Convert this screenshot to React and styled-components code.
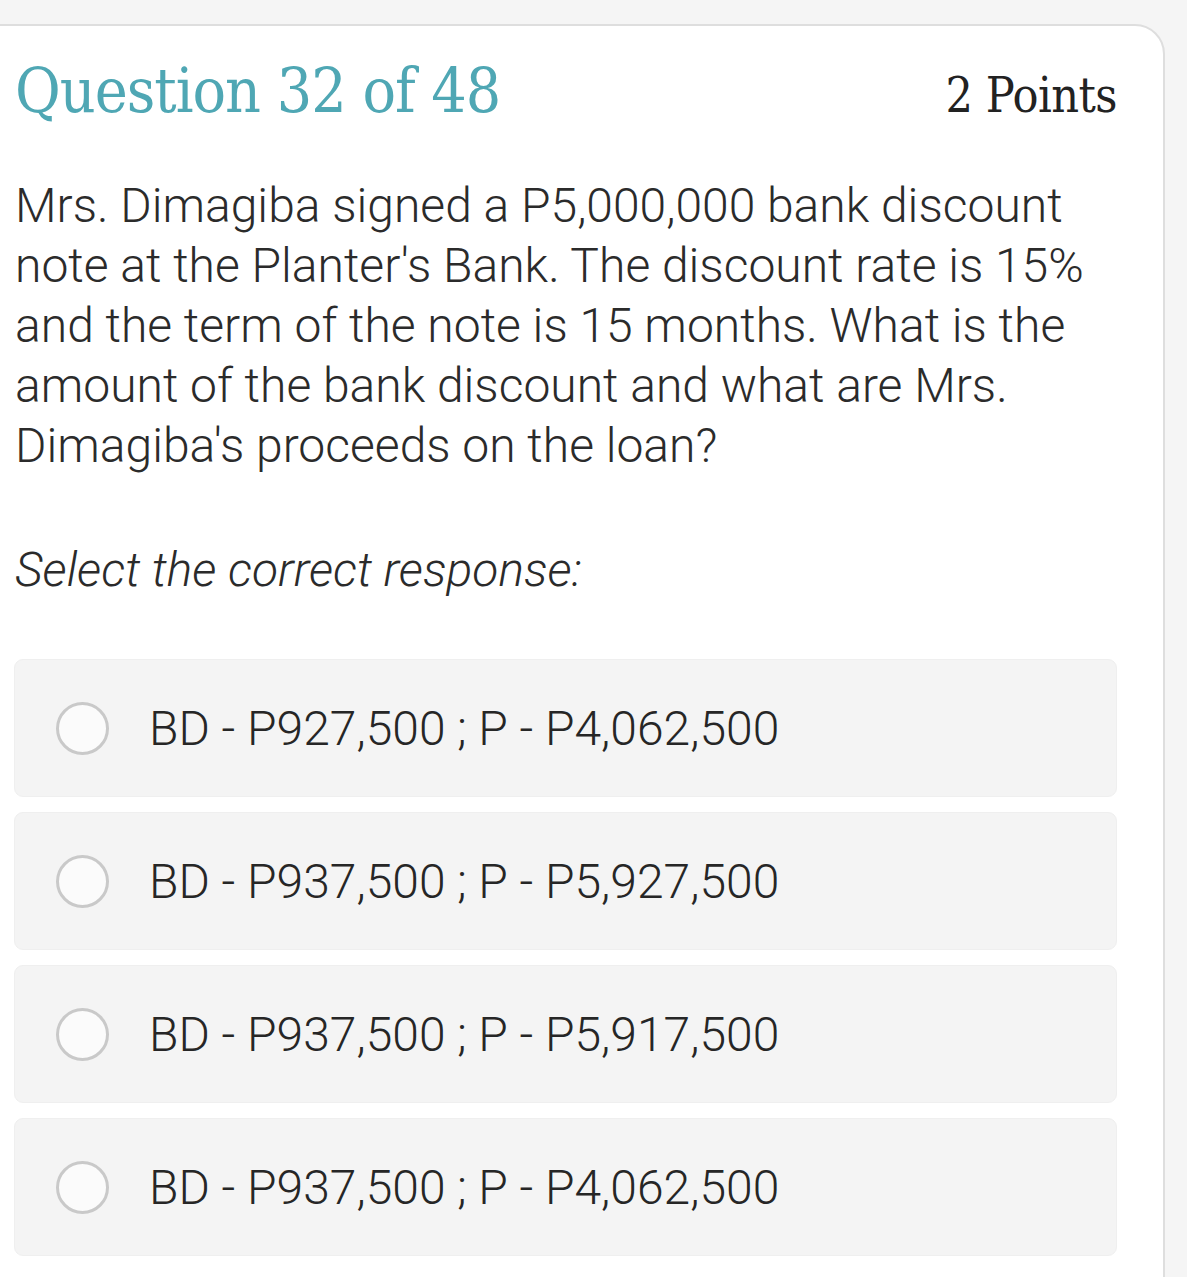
import React from 'react';
import styled, { createGlobalStyle } from 'styled-components';

const GlobalStyle = createGlobalStyle`
  html, body {
    margin: 0;
    padding: 0;
    background: #f5f5f5;
  }
  body {
    font-family: "Roboto Light", Roboto, "Noto Sans", "Liberation Sans", sans-serif;
    color: #2b2b2b;
  }
`;

const Page = styled.div`
  padding-top: 24px;
  overflow: hidden;
  min-height: 1277px;
  box-sizing: border-box;
`;

const Card = styled.div`
  box-sizing: border-box;
  margin-left: -20px;
  width: 1185px;
  min-height: 1260px;
  background: #fff;
  border: 2px solid #dedede;
  border-radius: 0 30px 0 0;
  padding: 30px 46px 0 33px;
`;

const Header = styled.div`
  display: flex;
  justify-content: space-between;
  align-items: baseline;
`;

const serif = `"Roboto Slab", "DejaVu Serif Condensed", "DejaVu Serif", serif`;

const Title = styled.h1`
  margin: 0;
  font-family: ${serif};
  font-stretch: semi-condensed;
  font-weight: 400;
  font-size: 62px;
  line-height: 70px;
  color: #4fa7b4;
  letter-spacing: -1px;
`;

const Points = styled.span`
  font-family: ${serif};
  font-stretch: semi-condensed;
  font-size: 48px;
  color: #222;
  letter-spacing: -0.5px;
`;

const Question = styled.p`
  margin: 50px 0 0;
  font-weight: 300;
  font-size: 48px;
  line-height: 60px;
  color: #2b2b2b;
`;

const Prompt = styled.p`
  margin: 64px 0 0;
  font-style: italic;
  font-weight: 300;
  font-size: 48px;
  line-height: 60px;
  color: #2b2b2b;
`;

const Options = styled.div`
  display: flex;
  flex-direction: column;
  gap: 15px;
  margin-top: 59px;
  margin-left: -1px;
`;

const Option = styled.label`
  box-sizing: border-box;
  height: 138px;
  display: flex;
  align-items: center;
  gap: 40px;
  padding-left: 41px;
  background: #f4f4f4;
  border: 1px solid #efefef;
  border-radius: 9px;
  cursor: pointer;
`;

const Radio = styled.span`
  box-sizing: border-box;
  width: 53px;
  height: 53px;
  border-radius: 50%;
  border: 3px solid #c9c9c9;
  background: #fbfbfb;
  flex-shrink: 0;
`;

const OptionText = styled.span`
  font-weight: 300;
  font-size: 48px;
  color: #262626;
`;

const choices = [
  'BD - P927,500 ; P - P4,062,500',
  'BD - P937,500 ; P - P5,927,500',
  'BD - P937,500 ; P - P5,917,500',
  'BD - P937,500 ; P - P4,062,500',
];

export default function App() {
  return (
    <>
      <GlobalStyle />
      <Page>
        <Card>
          <Header>
            <Title>Question 32 of 48</Title>
            <Points>2 Points</Points>
          </Header>
          <Question>
            Mrs. Dimagiba signed a P5,000,000 bank discount note at the Planter's Bank. The
            discount rate is 15% and the term of the note is 15 months. What is the amount of
            the bank discount and what are Mrs. Dimagiba's proceeds on the loan?
          </Question>
          <Prompt>Select the correct response:</Prompt>
          <Options>
            {choices.map((c) => (
              <Option key={c}>
                <Radio />
                <OptionText>{c}</OptionText>
              </Option>
            ))}
          </Options>
        </Card>
      </Page>
    </>
  );
}
